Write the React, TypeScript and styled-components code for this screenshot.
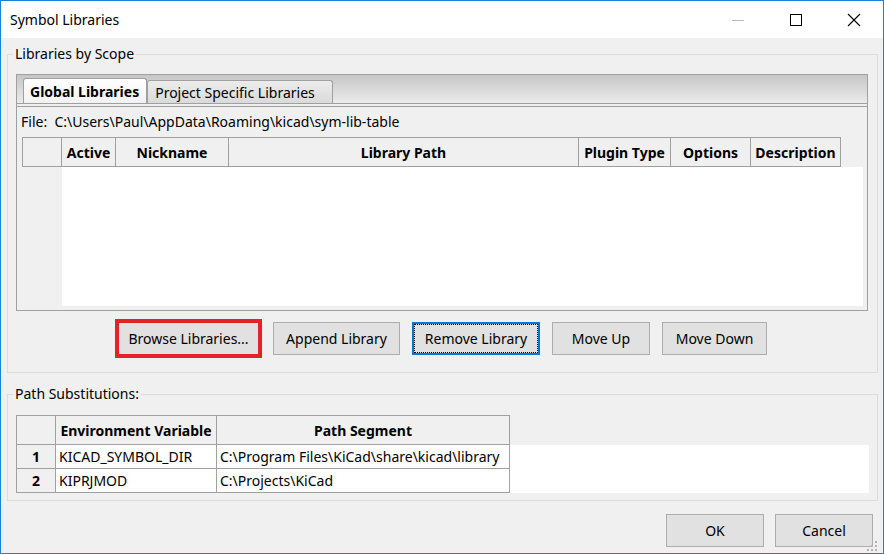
import React from 'react';
import styled, { createGlobalStyle, css } from 'styled-components';

const GlobalStyle = createGlobalStyle`
  html, body {
    margin: 0;
    padding: 0;
    background: #fff;
  }
  body {
    font-family: "Noto Sans", "Open Sans", sans-serif;
    font-size: 14px;
    color: #000;
  }
  * {
    box-sizing: border-box;
  }
`;

const libColumns = [
  { label: '', w: 40 },
  { label: 'Active', w: 54 },
  { label: 'Nickname', w: 113 },
  { label: 'Library Path', w: 350 },
  { label: 'Plugin Type', w: 92 },
  { label: 'Options', w: 80 },
  { label: 'Description', w: 90 },
];

const pathColumns = [
  { label: '', w: 40 },
  { label: 'Environment Variable', w: 161 },
  { label: 'Path Segment', w: 293 },
];

const pathRows = [
  { n: '1', name: 'KICAD_SYMBOL_DIR', path: 'C:\\Program Files\\KiCad\\share\\kicad\\library' },
  { n: '2', name: 'KIPRJMOD', path: 'C:\\Projects\\KiCad' },
];

const App: React.FC = () => {
  return (
    <>
      <GlobalStyle />
      <Window>
        <TitleBar>
          <Title>Symbol Libraries</Title>
          <CaptionButton>
            <svg width="14" height="14" viewBox="0 0 14 14">
              <line x1="1" y1="7.5" x2="13" y2="7.5" stroke="#b8b8b8" strokeWidth="1" />
            </svg>
          </CaptionButton>
          <CaptionButton>
            <svg width="14" height="14" viewBox="0 0 14 14">
              <rect x="1.5" y="1.5" width="11" height="11" fill="none" stroke="#000" strokeWidth="1" />
            </svg>
          </CaptionButton>
          <CaptionButton>
            <svg width="14" height="14" viewBox="0 0 14 14">
              <path d="M1 1 L13 13 M13 1 L1 13" stroke="#000" strokeWidth="1.1" />
            </svg>
          </CaptionButton>
        </TitleBar>

        <Body>
          <Group $pad="10px 9px 17px 8px">
            <Legend>Libraries by Scope</Legend>
            <Notebook>
              <TabStrip>
                <Tab $active>Global Libraries</Tab>
                <Tab>Project Specific Libraries</Tab>
              </TabStrip>
              <TabPanel>
                <FileLabel>File:&nbsp; C:\Users\Paul\AppData\Roaming\kicad\sym-lib-table</FileLabel>
                <LibGrid>
                  <HeaderRow>
                    {libColumns.map((c, i) => (
                      <HeadCell key={i} $w={c.w} $first={i === 0}>{c.label}</HeadCell>
                    ))}
                  </HeaderRow>
                  <LibBody>
                    <RowLabelColumn />
                    <WhiteArea />
                  </LibBody>
                </LibGrid>
              </TabPanel>
            </Notebook>
            <ButtonRow>
              <Button $w={141} $variant="marked">Browse Libraries...</Button>
              <Button $w={127}>Append Library</Button>
              <Button $w={128} $variant="focus">Remove Library</Button>
              <Button $w={98}>Move Up</Button>
              <Button $w={105}>Move Down</Button>
            </ButtonRow>
          </Group>

          <Group $pad="11px 8px 7px 8px" $gap={11}>
            <Legend>Path Substitutions:</Legend>
            <PathGrid>
              <HeaderRow>
                {pathColumns.map((c, i) => (
                  <HeadCell key={i} $w={c.w} $first={i === 0}>{c.label}</HeadCell>
                ))}
              </HeaderRow>
              {pathRows.map(r => (
                <DataRow key={r.n}>
                  <RowLabel>{r.n}</RowLabel>
                  <Cell $w={161}>{r.name}</Cell>
                  <Cell $w={293}>{r.path}</Cell>
                </DataRow>
              ))}
            </PathGrid>
          </Group>

          <Footer>
            <Button $w={98}>OK</Button>
            <Button $w={98}>Cancel</Button>
          </Footer>
        </Body>

        <Grip width="12" height="12" viewBox="0 0 12 12">
          {[[9, 1], [5, 5], [9, 5], [1, 9], [5, 9], [9, 9]].map(([x, y], i) => (
            <rect key={i} x={x} y={y} width="2" height="2" fill="#b4b4b4" />
          ))}
        </Grip>
      </Window>
    </>
  );
};

export default App;

// ==================== Styled Components ====================
const Window = styled.div`
  position: relative;
  width: 884px;
  height: 554px;
  border: 1px solid #1883d7;
  background: #f0f0f0;
  display: flex;
  flex-direction: column;
  overflow: hidden;
`;

const TitleBar = styled.div`
  height: 37px;
  flex-shrink: 0;
  background: #fff;
  display: flex;
  align-items: center;
`;

const Title = styled.div`
  flex: 1;
  padding-left: 9px;
  font-size: 14px;
`;

const CaptionButton = styled.div`
  width: 58px;
  height: 37px;
  display: flex;
  align-items: center;
  justify-content: center;

  svg {
    display: block;
  }
`;

const Body = styled.div`
  flex: 1;
  display: flex;
  flex-direction: column;
  padding: 6px 5px 0 6px;
`;

const Group = styled.fieldset<{ $pad: string; $gap?: number }>`
  margin: ${p => (p.$gap ? `${p.$gap}px 0 0 0` : '0')};
  padding: ${p => p.$pad};
  border: 1px solid #dcdcdc;
  min-width: 0;
`;

const Legend = styled.legend`
  margin-left: -3px;
  padding: 0 2px;
  line-height: 20px;
  font-size: 14px;
`;

const Notebook = styled.div`
  width: 852px;
  height: 237px;
  border: 1px solid #a0a0a0;
  display: flex;
  flex-direction: column;
`;

const TabStrip = styled.div`
  height: 29px;
  flex-shrink: 0;
  border-bottom: 1px solid #a0a0a0;
  background: linear-gradient(#c6c6c6, #ebebeb);
  display: flex;
  align-items: flex-end;
  padding-left: 6px;
`;

const Tab = styled.div<{ $active?: boolean }>`
  height: ${p => (p.$active ? 25 : 23)}px;
  padding: 0 ${p => (p.$active ? 7 : 17)}px 0 ${p => (p.$active ? 6 : 7)}px;
  border: 1px solid #a0a0a0;
  border-bottom: none;
  border-radius: 3px 3px 0 0;
  display: flex;
  align-items: center;
  font-weight: ${p => (p.$active ? 'bold' : 'normal')};
  background: ${p =>
    p.$active ? 'linear-gradient(#ffffff, #f2f2f2)' : 'linear-gradient(#ececec, #dadada)'};
  white-space: nowrap;
`;

const TabPanel = styled.div`
  flex: 1;
  margin-top: 2px;
  border-top: 1px solid #a0a0a0;
  padding: 5px 4px 4px 5px;
  display: flex;
  flex-direction: column;
`;

const FileLabel = styled.div`
  height: 20px;
  line-height: 20px;
  margin-left: -1px;
  margin-bottom: 5px;
  white-space: nowrap;
`;

const LibGrid = styled.div`
  width: 841px;
  height: 169px;
  display: flex;
  flex-direction: column;
`;

const HeaderRow = styled.div`
  height: 30px;
  flex-shrink: 0;
  display: flex;
  background: #f0f0f0;
`;

const HeadCell = styled.div<{ $w: number; $first?: boolean }>`
  width: ${p => p.$w}px;
  flex-shrink: 0;
  border-top: 1px solid #a0a0a0;
  border-bottom: 1px solid #a0a0a0;
  border-right: 1px solid #a0a0a0;
  ${p =>
    p.$first &&
    css`
      border-left: 1px solid #a0a0a0;
    `}
  display: flex;
  align-items: center;
  justify-content: center;
  font-weight: bold;
  white-space: nowrap;
`;

const LibBody = styled.div`
  flex: 1;
  display: flex;
`;

const RowLabelColumn = styled.div`
  width: 40px;
  background: #f0f0f0;
`;

const WhiteArea = styled.div`
  flex: 1;
  background: #fff;
`;

const ButtonRow = styled.div`
  margin-top: 11px;
  padding-left: 102px;
  display: flex;
  gap: 12px;
`;

const Button = styled.button<{ $w: number; $variant?: 'focus' | 'marked' }>`
  position: relative;
  width: ${p => p.$w}px;
  height: 33px;
  padding: 0;
  background: #e1e1e1;
  border: 1px solid #adadad;
  font-family: inherit;
  font-size: 14px;
  color: #000;
  white-space: nowrap;

  ${p =>
    p.$variant === 'focus' &&
    css`
      border: 2px solid #0078d7;
      &::after {
        content: '';
        position: absolute;
        inset: 0;
        border: 1px dotted #000;
      }
    `}

  ${p =>
    p.$variant === 'marked' &&
    css`
      margin-right: 2px;
      border-color: #e3222a;
      outline: 3px solid #e3222a;
    `}
`;

const PathGrid = styled.div`
  width: 853px;
  height: 78px;
  display: flex;
  flex-direction: column;
`;

const DataRow = styled.div`
  height: 24px;
  display: flex;
  background: #fff;
`;

const RowLabel = styled.div`
  width: 40px;
  flex-shrink: 0;
  background: #f0f0f0;
  border-left: 1px solid #a0a0a0;
  border-right: 1px solid #a0a0a0;
  border-bottom: 1px solid #a0a0a0;
  font-weight: bold;
  display: flex;
  align-items: center;
  justify-content: center;
`;

const Cell = styled.div<{ $w: number }>`
  width: ${p => p.$w}px;
  flex-shrink: 0;
  border-right: 1px solid #a0a0a0;
  border-bottom: 1px solid #a0a0a0;
  padding-left: 3px;
  display: flex;
  align-items: center;
  white-space: nowrap;
  overflow: hidden;
`;

const Footer = styled.div`
  margin-top: 13px;
  padding-right: 5px;
  display: flex;
  justify-content: flex-end;
  gap: 11px;
`;

const Grip = styled.svg`
  position: absolute;
  left: 865px;
  top: 539px;
`;
